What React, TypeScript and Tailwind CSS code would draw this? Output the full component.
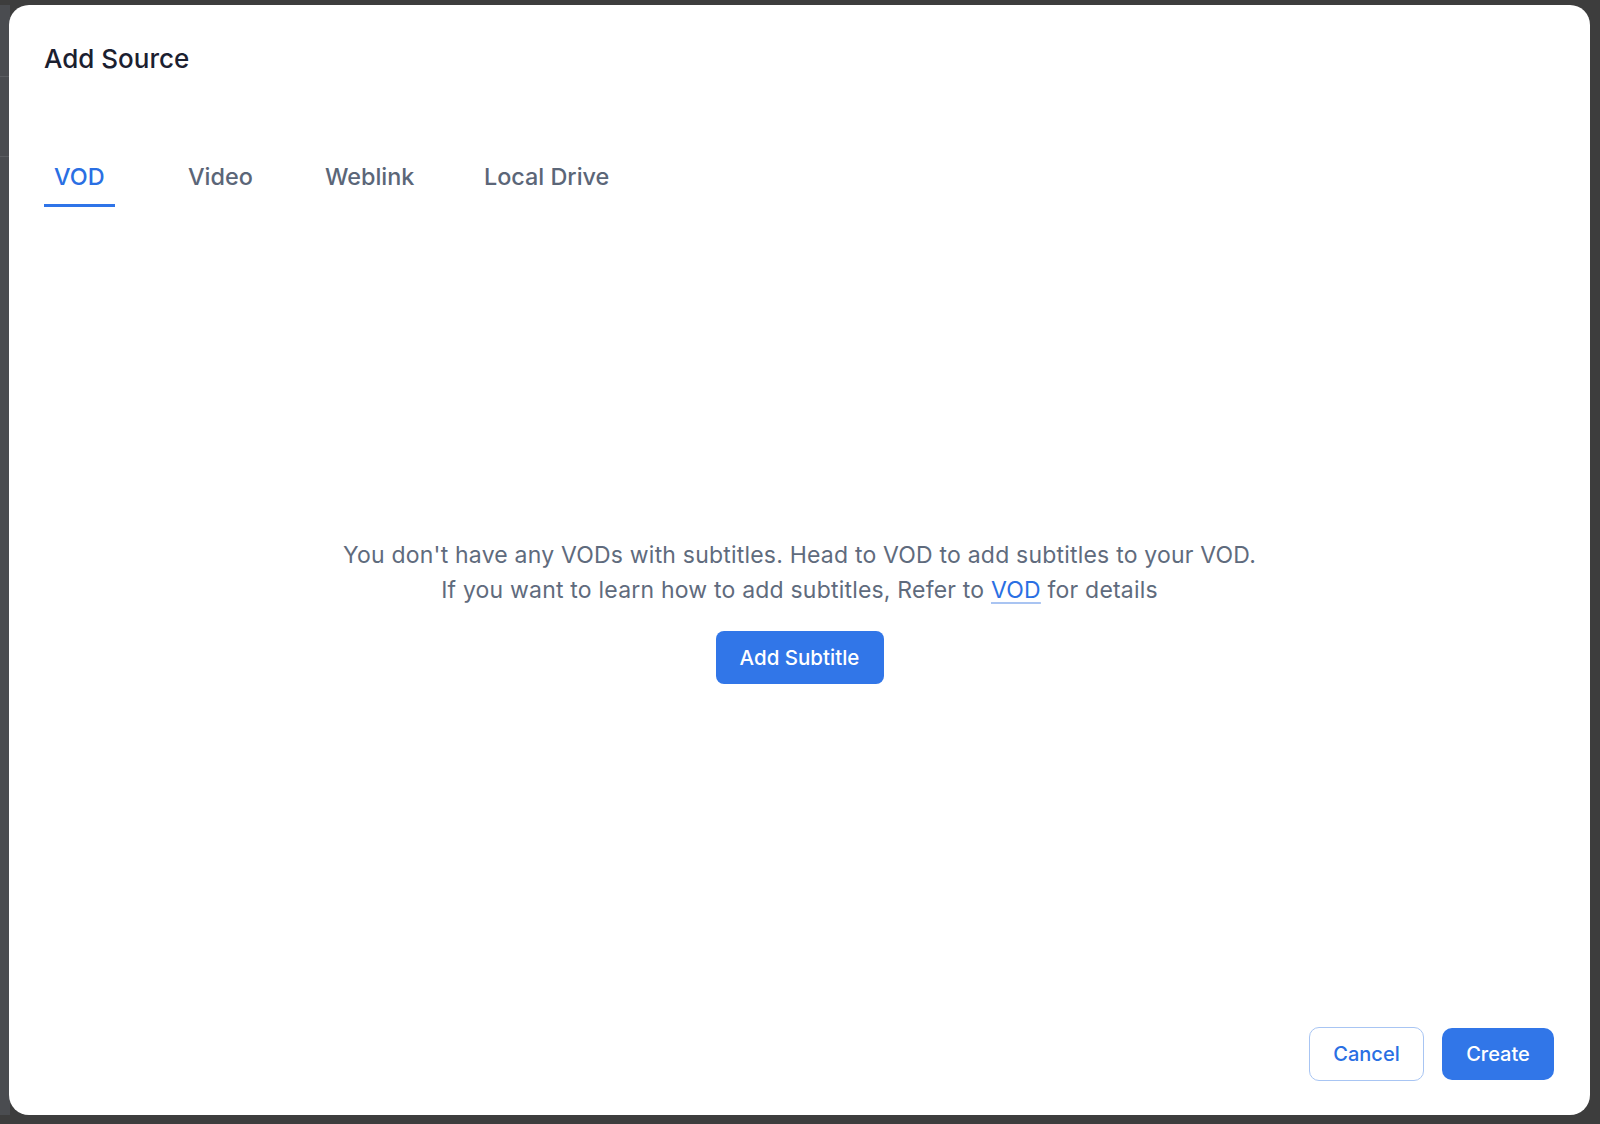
import React from "react";

const tabs = [
  { label: "VOD", w: "w-[134px]", active: true },
  { label: "Video", w: "w-[137px]", active: false },
  { label: "Weblink", w: "w-[159px]", active: false },
  { label: "Local Drive", w: "w-[160px]", active: false },
];

export default function App() {
  return (
    <div
      className="w-[1600px] h-[1124px] bg-[#3d3d3d] flex overflow-hidden"
      style={{ fontFamily: "Inter, 'Liberation Sans', 'Noto Sans', sans-serif" }}
    >
      <div className="w-[10px] mt-[5px] mb-[9px] bg-[#4a4c50] flex flex-col">
        <div className="h-[72px] border-b border-[#5a5c60]" />
        <div className="h-[80px] border-b border-[#5a5c60]" />
      </div>
      <div className="mt-[5px] w-[1581px] h-[1110px] bg-white rounded-[20px] flex flex-col -ml-[1px]">
        <div className="pl-[35px] pt-[37px] text-[26px] leading-[34px] font-medium text-[#1b2030]">
          Add Source
        </div>
        <div className="flex pl-[35px] mt-[85px]">
          {tabs.map((t) => (
            <div key={t.label} className={`${t.w} flex`}>
              <div
                className={
                  t.active
                    ? "px-[10px] pb-[11px] text-[23.4px] leading-[32px] font-medium text-[#2a6fe3] border-b-[3px] border-[#2f74e8]"
                    : "px-[10px] pb-[11px] text-[23.4px] leading-[32px] font-medium text-[#5b6678] border-b-[3px] border-transparent"
                }
              >
                {t.label}
              </div>
            </div>
          ))}
        </div>
        <div className="mt-[331px] flex flex-col items-center text-[23px] tracking-[0.2px] leading-[35px] text-[#5f6b7d]">
          <div>You don't have any VODs with subtitles. Head to VOD to add subtitles to your VOD.</div>
          <div>
            If you want to learn how to add subtitles, Refer to{" "}
            <span className="text-[#2a6fe3] underline decoration-[#a9c4f2] underline-offset-[4px]">VOD</span>{" "}
            for details
          </div>
          <button className="mt-[23px] w-[168px] h-[53px] rounded-[8px] bg-[#3176e8] text-white text-[20.5px] tracking-normal font-medium">
            Add Subtitle
          </button>
        </div>
        <div className="mt-auto flex justify-end gap-[18px] pr-[36px] pb-[34px]">
          <button className="w-[115px] h-[54px] rounded-[10px] border border-[#a8c5f3] bg-white text-[#2a6fe3] text-[20px] font-medium">
            Cancel
          </button>
          <button className="w-[112px] h-[52px] mt-[1px] rounded-[10px] bg-[#3176e8] text-white text-[20px] font-medium">
            Create
          </button>
        </div>
      </div>
    </div>
  );
}
